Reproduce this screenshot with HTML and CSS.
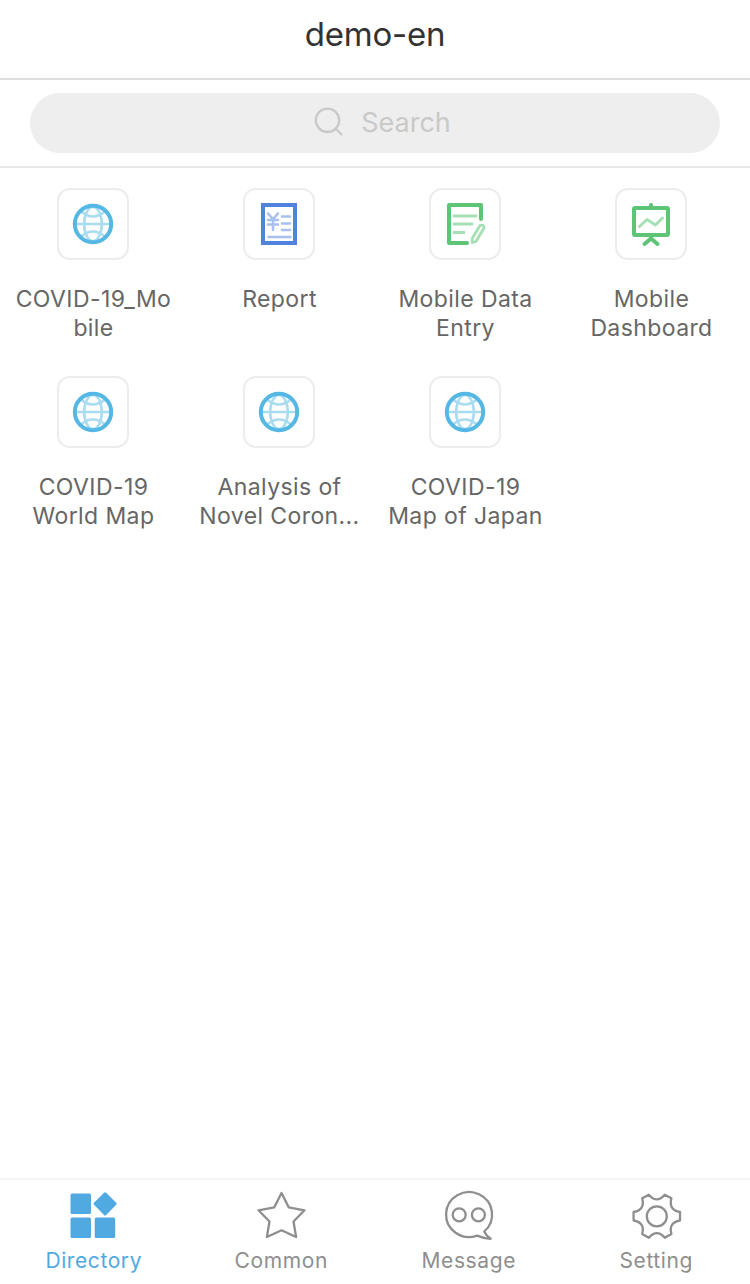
FILE: index.html
```html
<!DOCTYPE html>
<html lang="en">
<head>
<meta charset="utf-8">
<title>demo-en</title>
<link rel="stylesheet" href="styles.css">
</head>
<body>
<svg class="defs" width="0" height="0">
  <symbol id="globe" viewBox="0 0 42 42">
    <g fill="none" stroke="#a9dcf0" stroke-width="2.6">
      <path d="M4 21H38M9 8.500Q21 18.500 33 8.500M9 33.500Q21 23.500 33 33.500"/>
      <ellipse cx="21" cy="21" rx="8.800" ry="17"/>
    </g>
    <circle cx="21" cy="21" r="18.200" fill="none" stroke="#55b8e4" stroke-width="4"/>
  </symbol>
</svg>
<div class="app">
  <header class="header"><h1 class="title">demo-en</h1></header>
  <div class="search-bar">
    <div class="search">
      <svg class="search-icon" viewBox="0 0 30 30"><g fill="none" stroke="#c9c9c9" stroke-width="2.300" stroke-linecap="round"><circle cx="13.500" cy="12.300" r="11.700"/><path d="M21.500 20.500L27.500 26.500"/></g></svg>
      <span class="search-text">Search</span>
    </div>
  </div>
  <main class="grid">
    <div class="item"><div class="tile"><svg class="icon"><use href="#globe"/></svg></div><p class="label">COVID-19_Mo<br>bile</p></div>
    <div class="item"><div class="tile">
      <svg class="icon" viewBox="0 0 42 42"><rect x="5" y="2" width="32" height="38" fill="none" stroke="#5182dc" stroke-width="4"/><g fill="none" stroke="#a8c0ef" stroke-width="2.600" stroke-linecap="round"><path d="M10 10.500L15 16L20 10.500M15 16V27M10 17H20M10 21.500H20M24 13.500H32M24 20.500H32M24 27H32M10.500 34H32.500"/></g></svg>
    </div><p class="label">Report</p></div>
    <div class="item"><div class="tile">
      <svg class="icon" viewBox="0 0 42 42"><path d="M37 16V2H5V40H23" fill="none" stroke="#5ec476" stroke-width="4" stroke-linecap="round" stroke-linejoin="round"/><g fill="none" stroke="#a4e0b3" stroke-width="2.800" stroke-linecap="round"><path d="M10 13H32M10 21H28M10 29.500H20"/><path d="M36 22.500L28.200 35.500V39.500L32 38.500L40 25Q40 21 36 22.500Z" stroke-linejoin="round"/></g></svg>
    </div><p class="label">Mobile Data<br>Entry</p></div>
    <div class="item"><div class="tile">
      <svg class="icon" viewBox="0 0 42 42"><g fill="none" stroke="#5ec476" stroke-width="4" stroke-linecap="round" stroke-linejoin="round"><rect x="4" y="5" width="34" height="27" rx="1"/><path d="M21 2V5M21 33V36M14.500 41L21 35.500L27.500 41"/></g><path d="M9.500 23.500L17 16.500L25.500 22L32.500 15" fill="none" stroke="#a4e0b3" stroke-width="2.800" stroke-linecap="round" stroke-linejoin="round"/></svg>
    </div><p class="label">Mobile<br>Dashboard</p></div>
    <div class="item"><div class="tile"><svg class="icon"><use href="#globe"/></svg></div><p class="label">COVID-19<br>World Map</p></div>
    <div class="item"><div class="tile"><svg class="icon"><use href="#globe"/></svg></div><p class="label">Analysis of<br>Novel Coron...</p></div>
    <div class="item"><div class="tile"><svg class="icon"><use href="#globe"/></svg></div><p class="label">COVID-19<br>Map of Japan</p></div>
  </main>
  <nav class="tabs">
    <div class="tab active">
      <svg class="tab-icon" viewBox="1 0 50 50"><g fill="#51a9e1"><rect x="2.500" y="3.500" width="20.500" height="20.500" rx="1.500"/><rect x="2.500" y="27.500" width="20.500" height="20.500" rx="1.500"/><rect x="26.700" y="27.500" width="20.500" height="20.500" rx="1.500"/><rect x="28.500" y="5.200" width="17.200" height="17.200" rx="1.500" transform="rotate(45 37.100 13.800)"/></g></svg>
      <span>Directory</span>
    </div>
    <div class="tab">
      <svg class="tab-icon" viewBox="-0.500 0 50 50"><path d="M25 3L32.200 17.300L48 20.300L37 31.500L39.600 47L25 40.300L10.400 47L13 31.500L2 20.300L17.800 17.300Z" fill="none" stroke="#8e8e8e" stroke-width="2.300" stroke-linejoin="round"/></svg>
      <span>Common</span>
    </div>
    <div class="tab">
      <svg class="tab-icon" viewBox="0.300 -0.300 50 50"><g fill="none" stroke="#8e8e8e" stroke-width="2.300" stroke-linejoin="round"><path d="M40.500 41.200A23 22.500 0 1 0 33.500 45.300Q40 48.200 47 48.500Q42.500 45.500 40.500 41.200Z"/><circle cx="15.500" cy="24.500" r="6.500"/><circle cx="34.700" cy="24.500" r="6.500"/></g></svg>
      <span>Message</span>
    </div>
    <div class="tab">
      <svg class="tab-icon" viewBox="-0.800 0 50 50"><g fill="none" stroke="#8e8e8e" stroke-width="2.300" stroke-linejoin="round"><path d="M17 4.700Q25 14 33 4.700L39.600 8.300Q36.500 20 48.200 22V30.500Q36.500 32.500 39.600 44L33 47.800Q25 38.500 17 47.800L10.400 44Q13.500 32.500 1.800 30.500V22Q13.500 20 10.400 8.300Z"/><circle cx="25" cy="26.300" r="10"/></g></svg>
      <span>Setting</span>
    </div>
  </nav>
</div>
</body>
</html>
```
FILE: styles.css
```css
* { box-sizing: border-box; }
body {
  margin: 0;
  background: #fff;
  font-family: Inter, "Liberation Sans", sans-serif;
}
.defs { display: block; }
.app {
  display: flex;
  flex-direction: column;
  width: 750px;
  height: 1284px;
}
.header {
  height: 80px;
  border-bottom: 2px solid #dedede;
  padding-top: 13px;
  text-align: center;
}
.title {
  margin: 0;
  font-size: 33px;
  line-height: 42px;
  font-weight: 400;
  color: #333;
  letter-spacing: -0.2px;
}
.search-bar {
  height: 88px;
  padding: 13px 30px;
  border-bottom: 2px solid #e8e8e8;
}
.search {
  display: flex;
  align-items: center;
  justify-content: center;
  gap: 17px;
  height: 60px;
  padding-left: 15px;
  border-radius: 30px;
  background: #eee;
}
.search-icon { width: 30px; height: 30px; overflow: visible; }
.search-text {
  font-size: 27px;
  line-height: 34px;
  color: #c9c9c9;
}
.grid {
  flex: 1;
  display: grid;
  grid-template-columns: repeat(4, 186px);
  grid-auto-rows: 188px;
  align-content: start;
  padding-top: 20px;
}
.item {
  display: flex;
  flex-direction: column;
  align-items: center;
}
.tile {
  display: flex;
  align-items: center;
  justify-content: center;
  width: 72px;
  height: 72px;
  border: 2px solid #ececec;
  border-radius: 13px;
}
.icon { width: 42px; height: 42px; overflow: visible; }
.label {
  margin: 25px 0 0;
  padding-left: 1px;
  font-size: 23px;
  line-height: 29px;
  letter-spacing: 0.4px;
  color: #666;
  text-align: center;
  white-space: nowrap;
}
.tabs {
  display: flex;
  height: 106px;
  border-top: 2px solid #f5f5f5;
}
.tab {
  flex: 1;
  display: flex;
  flex-direction: column;
  align-items: center;
  padding-top: 10px;
  font-size: 21px;
  line-height: 28px;
  letter-spacing: 0.6px;
  color: #8e8e8e;
}
.tab-icon { width: 50px; height: 50px; margin-bottom: 7px; overflow: visible; }
.active { color: #51a9e1; }
```
